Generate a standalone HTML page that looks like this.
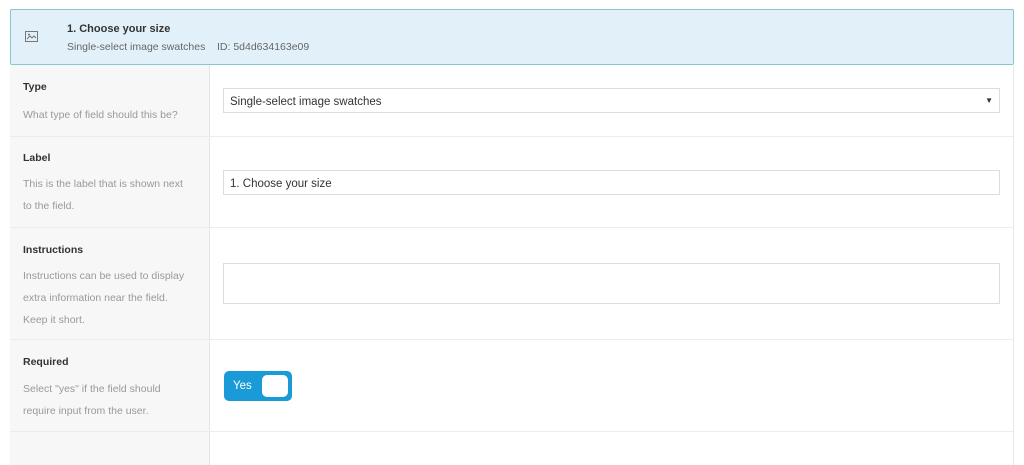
<!DOCTYPE html>
<html><head><style>
*{box-sizing:border-box;margin:0;padding:0}
body{width:1024px;height:443px;background:#fff;font-family:"Liberation Sans",sans-serif;overflow:hidden;position:relative}
.hdr{position:absolute;left:10px;top:9px;width:1004px;height:56px;background:#e2f1f9;border:1px solid #8cc3d3;border-radius:2px}
.hdr .t{position:absolute;left:56px;top:13px;font-size:11px;font-weight:bold;color:#333}
.hdr .s{position:absolute;left:56px;top:31px;font-size:10.5px;color:#666}
.box{position:absolute;left:10px;top:65px;width:1004px;height:400px;border-right:1px solid #e8e8e8;border-left:1px solid #eee}
.lc{position:absolute;left:10px;top:65px;width:200px;height:400px;background:#f7f7f7;border-right:1px solid #e4e4e4}
.sep{position:absolute;left:10px;width:1003px;height:1px;background:#ececec}
.lbl{position:absolute;left:23px;font-size:10.5px;font-weight:bold;color:#333}
.d{position:absolute;left:23px;font-size:10.5px;color:#999;line-height:22px}
.in{position:absolute;left:223px;width:777px;border:1px solid #ddd;background:#fff;font-size:11.5px;color:#333;padding-left:6px}
</style></head><body>
<div class="hdr">
<svg style="position:absolute;left:14px;top:21px" width="13" height="11" viewBox="0 0 13 11"><rect x="0.5" y="0.5" width="12" height="10" fill="none" stroke="#777"/><path d="M2 8l3-3 2 2 2-2 2 2" fill="none" stroke="#777"/><circle cx="4" cy="3.5" r="1" fill="#777"/></svg>
<div class="t">1. Choose your size</div>
<div class="s">Single-select image swatches &nbsp;&nbsp; ID: 5d4d634163e09</div>
</div>
<div class="box"></div>
<div class="lc"></div>
<div class="sep" style="top:136px"></div>
<div class="sep" style="top:227px"></div>
<div class="sep" style="top:339px"></div>
<div class="sep" style="top:431px"></div>

<div class="lbl" style="top:81px">Type</div>
<div class="d" style="top:104px">What type of field should this be?</div>
<div class="in" style="top:88px;height:25px;line-height:26px">Single-select image swatches<span style="position:absolute;right:6px;font-size:8px;line-height:24px">▼</span></div>

<div class="lbl" style="top:152px">Label</div>
<div class="d" style="top:173px">This is the label that is shown next<br>to the field.</div>
<div class="in" style="top:170px;height:25px;line-height:26px">1. Choose your size</div>

<div class="lbl" style="top:244px">Instructions</div>
<div class="d" style="top:265px">Instructions can be used to display<br>extra information near the field.<br>Keep it short.</div>
<div class="in" style="top:263px;height:41px"></div>

<div class="lbl" style="top:356px">Required</div>
<div class="d" style="top:378px">Select "yes" if the field should<br>require input from the user.</div>
<div style="position:absolute;left:224px;top:371px;width:68px;height:30px;background:#1a9ad6;border-radius:5px">
<span style="position:absolute;left:9px;top:9px;color:#fff;font-size:11.5px">Yes</span>
<div style="position:absolute;left:38px;top:4px;width:26px;height:22px;background:#fff;border-radius:5px"></div>
</div>
</body></html>
